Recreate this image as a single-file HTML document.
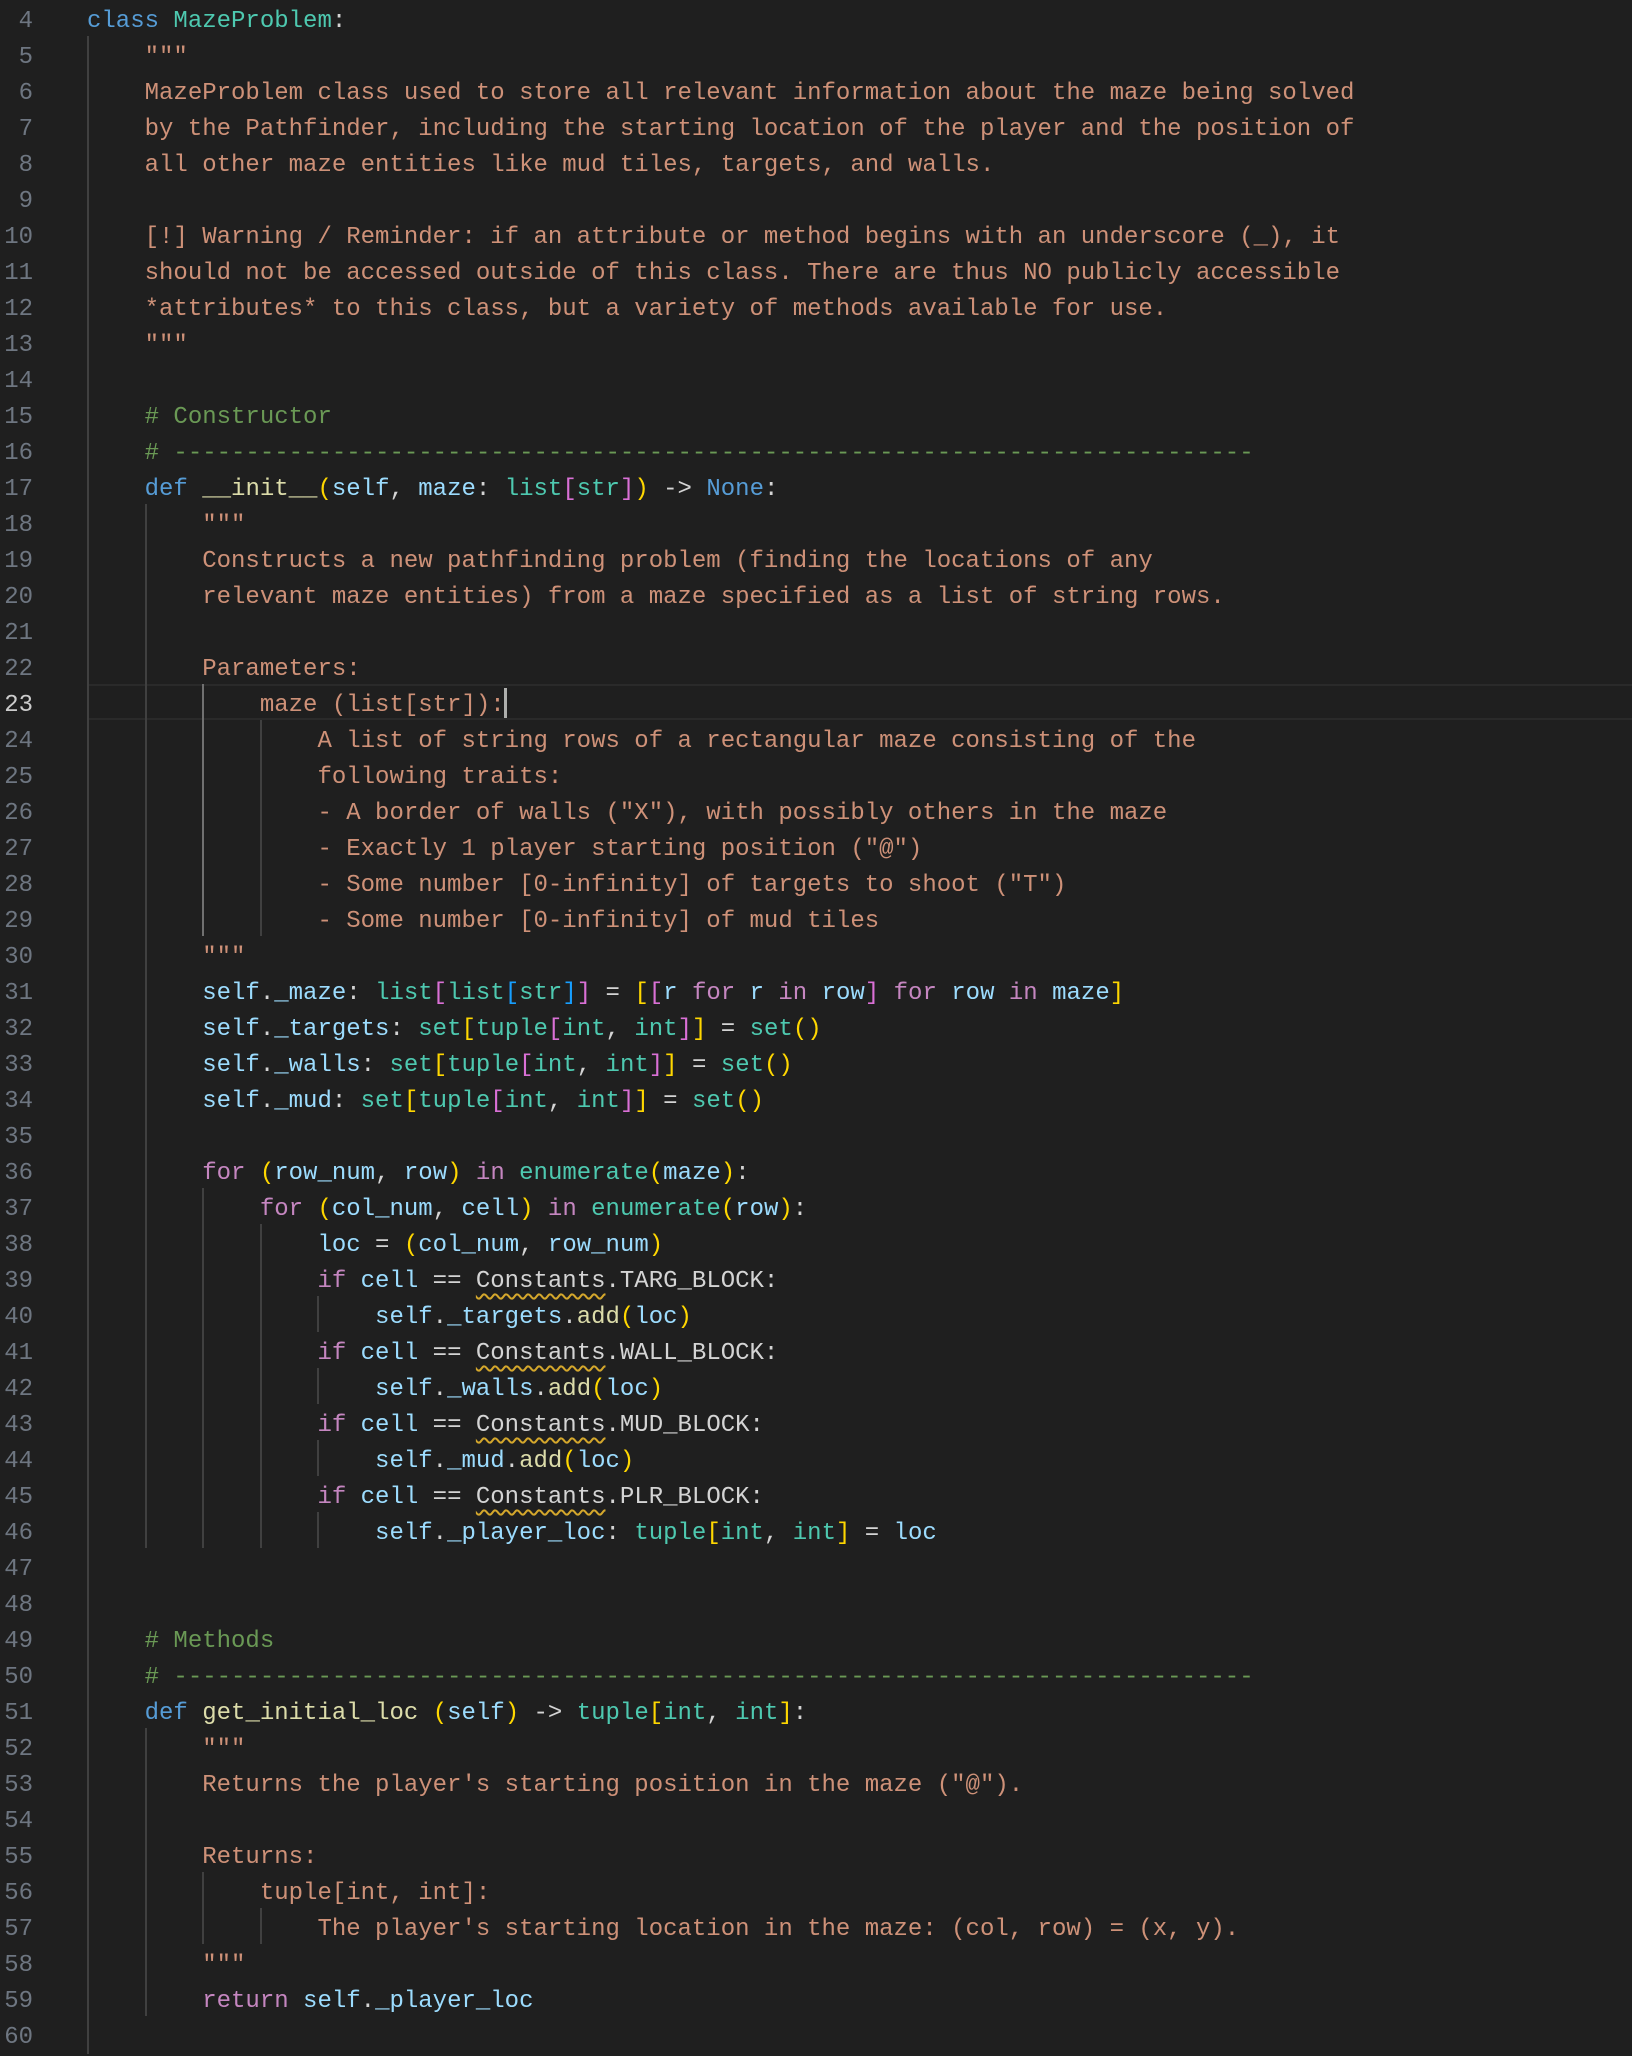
<!DOCTYPE html>
<html><head><meta charset="utf-8"><style>
body{margin:0;background:#1f1f1f;width:1632px;height:2054px;overflow:hidden;position:relative;font-family:"Liberation Mono",monospace;font-size:24px;}
.l{position:absolute;left:87px;height:36px;line-height:36px;padding-top:4px;white-space:pre;color:#d4d4d4;}
.n{position:absolute;left:0;width:33px;text-align:right;height:36px;line-height:36px;padding-top:4px;color:#6e7681;}
.g{position:absolute;width:2px;background:#404040;}
.k{color:#569cd6}.c{color:#c586c0}.t{color:#4ec9b0}.v{color:#9cdcfe}.f{color:#dcdcaa}.s{color:#ce9178}.m{color:#6a9955}
.y{color:#ffd700}.p{color:#da70d6}.b{color:#179fff}
.q{text-decoration:underline wavy #d4a72c;text-underline-offset:6px;text-decoration-thickness:2px}
</style></head><body>
<div style="position:absolute;left:87px;right:0;top:684px;height:36px;box-sizing:border-box;border-top:2px solid #2a2a2a;border-bottom:2px solid #2a2a2a"></div>
<div style="position:absolute;left:504px;top:688px;width:3px;height:30px;background:#aeafad"></div>

<div class="g" style="left:87px;top:36px;height:2018px"></div>
<div class="g" style="left:145px;top:504px;height:1044px"></div>
<div class="g" style="left:145px;top:1728px;height:288px"></div>
<div class="g" style="left:202px;top:684px;height:252px;background:#707070"></div>
<div class="g" style="left:202px;top:1188px;height:360px"></div>
<div class="g" style="left:202px;top:1872px;height:72px"></div>
<div class="g" style="left:260px;top:720px;height:216px"></div>
<div class="g" style="left:260px;top:1224px;height:324px"></div>
<div class="g" style="left:260px;top:1908px;height:36px"></div>
<div class="g" style="left:317px;top:1296px;height:36px"></div>
<div class="g" style="left:317px;top:1368px;height:36px"></div>
<div class="g" style="left:317px;top:1440px;height:36px"></div>
<div class="g" style="left:317px;top:1512px;height:36px"></div>

<div class="n" style="top:0">4</div><div class="n" style="top:36px">5</div><div class="n" style="top:72px">6</div><div class="n" style="top:108px">7</div><div class="n" style="top:144px">8</div><div class="n" style="top:180px">9</div><div class="n" style="top:216px">10</div><div class="n" style="top:252px">11</div><div class="n" style="top:288px">12</div><div class="n" style="top:324px">13</div><div class="n" style="top:360px">14</div><div class="n" style="top:396px">15</div><div class="n" style="top:432px">16</div><div class="n" style="top:468px">17</div><div class="n" style="top:504px">18</div><div class="n" style="top:540px">19</div><div class="n" style="top:576px">20</div><div class="n" style="top:612px">21</div><div class="n" style="top:648px">22</div><div class="n" style="top:684px;color:#cccccc">23</div><div class="n" style="top:720px">24</div><div class="n" style="top:756px">25</div><div class="n" style="top:792px">26</div><div class="n" style="top:828px">27</div><div class="n" style="top:864px">28</div><div class="n" style="top:900px">29</div><div class="n" style="top:936px">30</div><div class="n" style="top:972px">31</div><div class="n" style="top:1008px">32</div><div class="n" style="top:1044px">33</div><div class="n" style="top:1080px">34</div><div class="n" style="top:1116px">35</div><div class="n" style="top:1152px">36</div><div class="n" style="top:1188px">37</div><div class="n" style="top:1224px">38</div><div class="n" style="top:1260px">39</div><div class="n" style="top:1296px">40</div><div class="n" style="top:1332px">41</div><div class="n" style="top:1368px">42</div><div class="n" style="top:1404px">43</div><div class="n" style="top:1440px">44</div><div class="n" style="top:1476px">45</div><div class="n" style="top:1512px">46</div><div class="n" style="top:1548px">47</div><div class="n" style="top:1584px">48</div><div class="n" style="top:1620px">49</div><div class="n" style="top:1656px">50</div><div class="n" style="top:1692px">51</div><div class="n" style="top:1728px">52</div><div class="n" style="top:1764px">53</div><div class="n" style="top:1800px">54</div><div class="n" style="top:1836px">55</div><div class="n" style="top:1872px">56</div><div class="n" style="top:1908px">57</div><div class="n" style="top:1944px">58</div><div class="n" style="top:1980px">59</div><div class="n" style="top:2016px">60</div>

<div class="l" style="top:0"><span class="k">class</span> <span class="t">MazeProblem</span>:</div>
<div class="l s" style="top:36px">    """</div>
<div class="l s" style="top:72px">    MazeProblem class used to store all relevant information about the maze being solved</div>
<div class="l s" style="top:108px">    by the Pathfinder, including the starting location of the player and the position of</div>
<div class="l s" style="top:144px">    all other maze entities like mud tiles, targets, and walls.</div>
<div class="l s" style="top:216px">    [!] Warning / Reminder: if an attribute or method begins with an underscore (_), it</div>
<div class="l s" style="top:252px">    should not be accessed outside of this class. There are thus NO publicly accessible</div>
<div class="l s" style="top:288px">    *attributes* to this class, but a variety of methods available for use.</div>
<div class="l s" style="top:324px">    """</div>
<div class="l m" style="top:396px">    # Constructor</div>
<div class="l m" style="top:432px">    # ---------------------------------------------------------------------------</div>
<div class="l" style="top:468px">    <span class="k">def</span> <span class="f">__init__</span><span class="y">(</span><span class="v">self</span>, <span class="v">maze</span>: <span class="t">list</span><span class="p">[</span><span class="t">str</span><span class="p">]</span><span class="y">)</span> -&gt; <span class="k">None</span>:</div>
<div class="l s" style="top:504px">        """</div>
<div class="l s" style="top:540px">        Constructs a new pathfinding problem (finding the locations of any</div>
<div class="l s" style="top:576px">        relevant maze entities) from a maze specified as a list of string rows.</div>
<div class="l s" style="top:648px">        Parameters:</div>
<div class="l s" style="top:684px">            maze (list[str]):</div>
<div class="l s" style="top:720px">                A list of string rows of a rectangular maze consisting of the</div>
<div class="l s" style="top:756px">                following traits:</div>
<div class="l s" style="top:792px">                - A border of walls ("X"), with possibly others in the maze</div>
<div class="l s" style="top:828px">                - Exactly 1 player starting position ("@")</div>
<div class="l s" style="top:864px">                - Some number [0-infinity] of targets to shoot ("T")</div>
<div class="l s" style="top:900px">                - Some number [0-infinity] of mud tiles</div>
<div class="l s" style="top:936px">        """</div>
<div class="l" style="top:972px">        <span class="v">self</span>.<span class="v">_maze</span>: <span class="t">list</span><span class="p">[</span><span class="t">list</span><span class="b">[</span><span class="t">str</span><span class="b">]</span><span class="p">]</span> = <span class="y">[</span><span class="p">[</span><span class="v">r</span> <span class="c">for</span> <span class="v">r</span> <span class="c">in</span> <span class="v">row</span><span class="p">]</span> <span class="c">for</span> <span class="v">row</span> <span class="c">in</span> <span class="v">maze</span><span class="y">]</span></div>
<div class="l" style="top:1008px">        <span class="v">self</span>.<span class="v">_targets</span>: <span class="t">set</span><span class="y">[</span><span class="t">tuple</span><span class="p">[</span><span class="t">int</span>, <span class="t">int</span><span class="p">]</span><span class="y">]</span> = <span class="t">set</span><span class="y">()</span></div>
<div class="l" style="top:1044px">        <span class="v">self</span>.<span class="v">_walls</span>: <span class="t">set</span><span class="y">[</span><span class="t">tuple</span><span class="p">[</span><span class="t">int</span>, <span class="t">int</span><span class="p">]</span><span class="y">]</span> = <span class="t">set</span><span class="y">()</span></div>
<div class="l" style="top:1080px">        <span class="v">self</span>.<span class="v">_mud</span>: <span class="t">set</span><span class="y">[</span><span class="t">tuple</span><span class="p">[</span><span class="t">int</span>, <span class="t">int</span><span class="p">]</span><span class="y">]</span> = <span class="t">set</span><span class="y">()</span></div>
<div class="l" style="top:1152px">        <span class="c">for</span> <span class="y">(</span><span class="v">row_num</span>, <span class="v">row</span><span class="y">)</span> <span class="c">in</span> <span class="t">enumerate</span><span class="y">(</span><span class="v">maze</span><span class="y">)</span>:</div>
<div class="l" style="top:1188px">            <span class="c">for</span> <span class="y">(</span><span class="v">col_num</span>, <span class="v">cell</span><span class="y">)</span> <span class="c">in</span> <span class="t">enumerate</span><span class="y">(</span><span class="v">row</span><span class="y">)</span>:</div>
<div class="l" style="top:1224px">                <span class="v">loc</span> = <span class="y">(</span><span class="v">col_num</span>, <span class="v">row_num</span><span class="y">)</span></div>
<div class="l" style="top:1260px">                <span class="c">if</span> <span class="v">cell</span> == <span class="q">Constants</span>.TARG_BLOCK:</div>
<div class="l" style="top:1296px">                    <span class="v">self</span>.<span class="v">_targets</span>.<span class="f">add</span><span class="y">(</span><span class="v">loc</span><span class="y">)</span></div>
<div class="l" style="top:1332px">                <span class="c">if</span> <span class="v">cell</span> == <span class="q">Constants</span>.WALL_BLOCK:</div>
<div class="l" style="top:1368px">                    <span class="v">self</span>.<span class="v">_walls</span>.<span class="f">add</span><span class="y">(</span><span class="v">loc</span><span class="y">)</span></div>
<div class="l" style="top:1404px">                <span class="c">if</span> <span class="v">cell</span> == <span class="q">Constants</span>.MUD_BLOCK:</div>
<div class="l" style="top:1440px">                    <span class="v">self</span>.<span class="v">_mud</span>.<span class="f">add</span><span class="y">(</span><span class="v">loc</span><span class="y">)</span></div>
<div class="l" style="top:1476px">                <span class="c">if</span> <span class="v">cell</span> == <span class="q">Constants</span>.PLR_BLOCK:</div>
<div class="l" style="top:1512px">                    <span class="v">self</span>.<span class="v">_player_loc</span>: <span class="t">tuple</span><span class="y">[</span><span class="t">int</span>, <span class="t">int</span><span class="y">]</span> = <span class="v">loc</span></div>
<div class="l m" style="top:1620px">    # Methods</div>
<div class="l m" style="top:1656px">    # ---------------------------------------------------------------------------</div>
<div class="l" style="top:1692px">    <span class="k">def</span> <span class="f">get_initial_loc</span> <span class="y">(</span><span class="v">self</span><span class="y">)</span> -&gt; <span class="t">tuple</span><span class="y">[</span><span class="t">int</span>, <span class="t">int</span><span class="y">]</span>:</div>
<div class="l s" style="top:1728px">        """</div>
<div class="l s" style="top:1764px">        Returns the player's starting position in the maze ("@").</div>
<div class="l s" style="top:1836px">        Returns:</div>
<div class="l s" style="top:1872px">            tuple[int, int]:</div>
<div class="l s" style="top:1908px">                The player's starting location in the maze: (col, row) = (x, y).</div>
<div class="l s" style="top:1944px">        """</div>
<div class="l" style="top:1980px">        <span class="c">return</span> <span class="v">self</span>.<span class="v">_player_loc</span></div>
</body></html>
